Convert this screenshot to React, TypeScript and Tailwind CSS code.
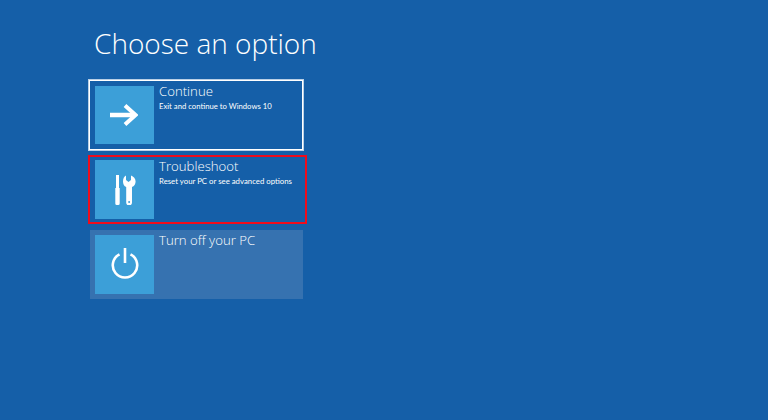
const ArrowIcon = () => (
  <svg className="mr-[1px] mb-[1px]" width="28" height="22" viewBox="0 0 28 22" fill="none" stroke="white">
    <path d="M0 11H25" strokeWidth="4.5" />
    <path d="M15 1.5L25.5 11L15 20.5" strokeWidth="4" />
  </svg>
);

const ToolsIcon = () => (
  <svg className="ml-[2px]" width="22" height="30" viewBox="0 0 22 30" fill="white">
    <path d="M1 0h3v13h.7v15.5A1.5 1.5 0 0 1 3.2 30H1.8A1.5 1.5 0 0 1 .3 28.5V13H1z" />
    <path d="M11 .5V5l2.5 2L16 5V.5c2.6.9 4.6 2.9 4.6 6 0 2.6-1.4 4.6-3.6 5.6v15.4a2.9 2.9 0 0 1-5.8 0V12.100C9.100 11.100 8 9.100 8 6.500 8 3.400 9 1.400 11 .5z" />
    <circle cx="14.100" cy="27" r="1" fill="#3c9fd8" />
  </svg>
);

const PowerIcon = () => (
  <svg className="mb-[2px]" width="28" height="31" viewBox="0 0 28 31" fill="none" stroke="white" strokeWidth="2.6">
    <path d="M14 0V15" />
    <path d="M8.500 6.400a12.200 12.200 0 1 0 11 0" />
  </svg>
);

export default function App() {
  return (
    <div className="h-[420px] w-[768px] overflow-hidden bg-[#155fa8] text-white font-['Open_Sans','Noto_Sans',sans-serif]">
      <h1 className="ml-[94px] pt-[24px] h-[80px] text-[28px] leading-[38px] font-light">Choose an option</h1>

      <div className="ml-[89px] flex h-[70px] w-[214px] border border-white p-[5px] outline-1 outline-white/70">
        <div className="flex h-[58px] w-[59px] shrink-0 items-center justify-center bg-[#3c9fd8]">
          <ArrowIcon />
        </div>
        <div className="ml-[5px] -mt-[5px]">
          <div className="text-[13.2px] leading-[20px] font-light">Continue</div>
          <div className="-mt-[1px] font-['Lato',sans-serif] text-[7.7px] leading-[12px]">Exit and continue to Windows 10</div>
        </div>
      </div>

      <div className="mt-[5px] ml-[88px] flex h-[69px] w-[219px] border-2 border-[#ee0c1c] pt-[3px] pl-[5px]">
        <div className="flex h-[59px] w-[59px] shrink-0 items-center justify-center bg-[#3c9fd8]">
          <ToolsIcon />
        </div>
        <div className="ml-[5px] -mt-[4px]">
          <div className="text-[13.2px] leading-[20px] font-light">Troubleshoot</div>
          <div className="-mt-[1px] font-['Lato',sans-serif] text-[7.8px] leading-[12px]">Reset your PC or see advanced options</div>
        </div>
      </div>

      <div className="mt-[6px] ml-[90px] flex h-[69px] w-[213px] bg-[#3672b0] pt-[5px] pl-[5px]">
        <div className="flex h-[59px] w-[59px] shrink-0 items-center justify-center bg-[#3c9fd8]">
          <PowerIcon />
        </div>
        <div className="ml-[5px] -mt-[5px] text-[13.2px] leading-[20px] font-light">Turn off your PC</div>
      </div>
    </div>
  );
}
